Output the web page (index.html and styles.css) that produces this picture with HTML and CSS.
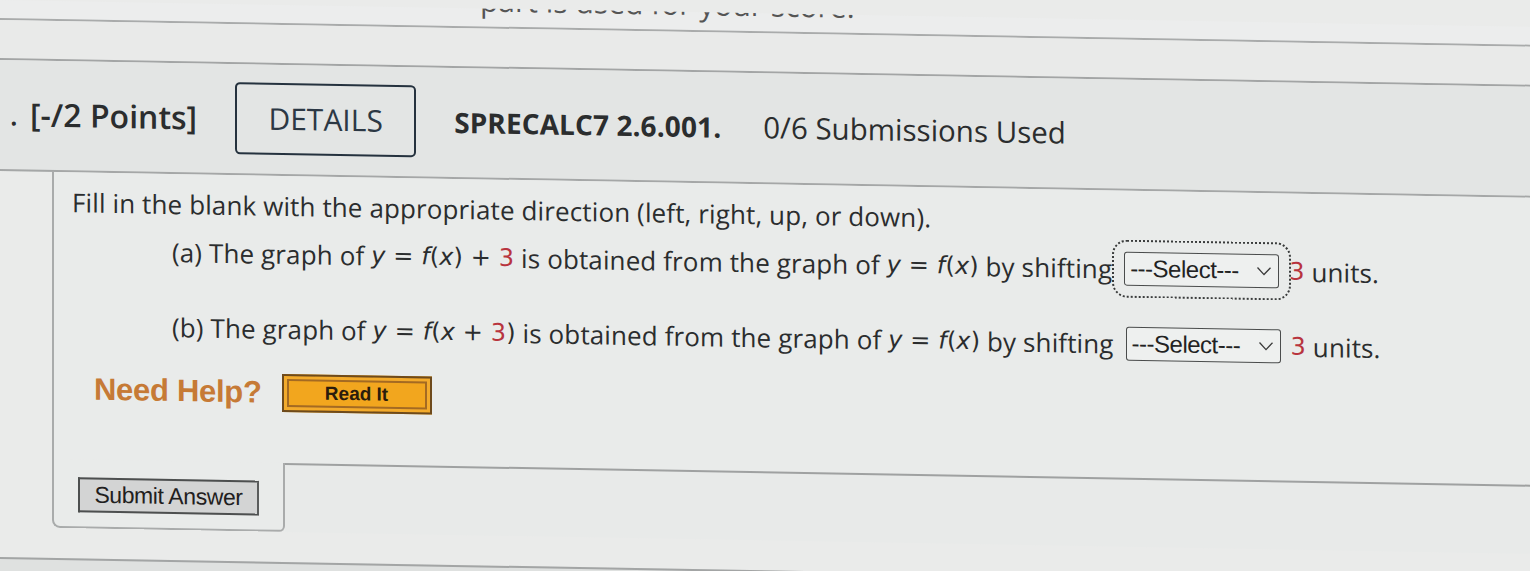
FILE: index.html
```html
<!DOCTYPE html>
<html lang="en">
<head>
<meta charset="utf-8">
<title>SPRECALC7 2.6.001</title>
<link rel="stylesheet" href="styles.css">
</head>
<body>
<div class="page">
  <div class="topstrip"><span class="toptext">part is used for your score.</span></div>
  <div class="band"></div>
  <div class="header">
    <span class="dot">.</span>
    <span class="points">[-/2 Points]</span>
    <button class="details">DETAILS</button>
    <span class="code">SPRECALC7 2.6.001.</span>
    <span class="subs">0/6 Submissions Used</span>
  </div>
  <div class="content">
    <div class="qbox">
      <p class="intro">Fill in the blank with the appropriate direction (left, right, up, or down).</p>
      <div class="parts">
        <div class="part">(a) The graph of <span class="m"><i>y</i> = <i>f</i>(<i>x</i>) + <span class="red">3</span></span> is obtained from the graph of <span class="m"><i>y</i> = <i>f</i>(<i>x</i>)</span> by shifting<span class="sel focus">---Select---<svg class="chev" viewBox="0 0 16 10" width="16" height="10"><path d="M1.5 1.5 L8 8.5 L14.5 1.5" fill="none" stroke="#3a3a3a" stroke-width="1.3"/></svg></span><span class="m red">3</span> units.</div>
        <div class="part">(b) The graph of <span class="m"><i>y</i> = <i>f</i>(<i>x</i> + <span class="red">3</span>)</span> is obtained from the graph of <span class="m"><i>y</i> = <i>f</i>(<i>x</i>)</span> by shifting<span class="sel">---Select---<svg class="chev" viewBox="0 0 16 10" width="16" height="10"><path d="M1.5 1.5 L8 8.5 L14.5 1.5" fill="none" stroke="#3a3a3a" stroke-width="1.3"/></svg></span><span class="m red">3</span> units.</div>
      </div>
      <div class="help">
        <span class="needhelp">Need Help?</span>
        <button class="readit">Read It</button>
      </div>
    </div>
    <div class="bottomrow">
      <div class="tab"><button class="submit">Submit Answer</button></div>
      <div class="tabfill"></div>
    </div>
  </div>
  <div class="footer"></div>
</div>
</body>
</html>
```
FILE: styles.css
```css
html, body {
  margin: 0;
  padding: 0;
  overflow: hidden;
  background: #eaebea;
}
.page {
  width: 1530px;
  transform: skewY(1deg);
  transform-origin: 0 0;
  font-family: "Open Sans", "DejaVu Sans", sans-serif;
  color: #2b2d2e;
}
.topstrip {
  height: 20px;
  background: #eceded;
  border-bottom: 2px solid #a9abab;
  overflow: hidden;
  box-sizing: border-box;
  padding-left: 480px;
}
.toptext {
  display: block;
  font-size: 30px;
  line-height: 30px;
  margin-top: -23px;
  color: #555;
}
.band {
  height: 40px;
  box-sizing: border-box;
  background: #e9eae9;
  border-bottom: 2px solid #a3a5a5;
}
.header {
  height: 111px;
  box-sizing: border-box;
  background: #e3e5e4;
  border-bottom: 2px solid #a5a7a7;
  display: flex;
  align-items: center;
  padding-left: 10px;
  padding-bottom: 2px;
}
.dot {
  font-size: 28px;
  font-weight: 600;
  width: 20px;
}
.points {
  font-size: 32px;
  font-weight: 600;
  margin-right: 38px;
}
.details {
  width: 181px;
  height: 72px;
  box-sizing: border-box;
  border: 2px solid #25323e;
  border-radius: 5px;
  background: transparent;
  font-family: "Open Sans", sans-serif;
  font-size: 30px;
  color: #2c3844;
  margin-right: 38px;
  padding: 0;
}
.code {
  font-size: 28px;
  font-weight: 700;
  margin-right: 42px;
  letter-spacing: 0.1px;
}
.subs {
  font-size: 29.5px;
  font-weight: 400;
}
.content {
  margin-left: 52px;
}
.qbox {
  border-left: 2px solid #a9abab;
  background: #e9ebea;
  padding: 13px 0 51px 18px;
}
.intro {
  margin: 0;
  font-size: 26px;
  line-height: 34px;
  letter-spacing: 0.12px;
}
.parts {
  display: flex;
  flex-direction: column;
  gap: 35px;
  margin-top: 11px;
  padding-left: 100px;
}
.part {
  font-size: 26px;
  line-height: 40px;
  display: flex;
  align-items: center;
  white-space: pre;
  letter-spacing: 0.12px;
}
.m {
  font-family: "DejaVu Sans", Verdana, sans-serif;
  font-size: 24px;
}
.m i {
  font-style: italic;
}
.red {
  color: #b8343e;
}
.sel {
  display: inline-flex;
  align-items: center;
  justify-content: space-between;
  width: 155px;
  height: 34px;
  box-sizing: border-box;
  border: 1px solid #4a4c4c;
  border-radius: 3px;
  background: #eef0ef;
  font-family: "Liberation Sans", Arial, sans-serif;
  font-size: 24px;
  padding: 0 6px 0 5px;
  margin: 0 10px 0 12px;
  color: #222;
  letter-spacing: -0.5px;
}
.focus {
  outline: 2px dotted #3a3c3c;
  outline-offset: 10px;
}
.chev {
  margin-left: 3px;
}
.help {
  display: flex;
  align-items: center;
  height: 38px;
  margin-top: 25px;
  padding-left: 22px;
}
.needhelp {
  font-family: "Liberation Sans", Arial, sans-serif;
  font-weight: 700;
  font-size: 31px;
  color: #c67a36;
  margin-right: 20px;
  letter-spacing: -0.3px;
}
.readit {
  width: 150px;
  height: 38px;
  box-sizing: border-box;
  background: #f2a61e;
  border: 2px solid #6e4a1c;
  box-shadow: inset 0 0 0 3px #f3ab2c, inset 0 0 0 5px #a46a22;
  font-family: "Liberation Sans", Arial, sans-serif;
  font-weight: 700;
  font-size: 19px;
  color: #2a1c0c;
  padding: 0;
}
.bottomrow {
  display: flex;
}
.tab {
  width: 233px;
  height: 69px;
  box-sizing: border-box;
  border-left: 2px solid #a9abab;
  border-right: 2px solid #a9abab;
  border-bottom: 2px solid #a9abab;
  border-radius: 0 0 6px 8px;
  background: #e9ebea;
  padding: 18px 0 0 24px;
}
.submit {
  width: 181px;
  height: 35px;
  box-sizing: border-box;
  background: #d3d4d4;
  border: 2px solid #4d4f4f;
  border-right-color: #5a5c5c;
  font-family: "Liberation Sans", Arial, sans-serif;
  font-size: 23px;
  color: #1f2020;
  padding: 0;
  letter-spacing: -0.4px;
}
.tabfill {
  flex: 1;
  border-top: 2px solid #9fa1a1;
  background: #e8eae9;
}
.footer {
  margin-top: 30px;
  height: 60px;
  border-top: 2px solid #a3a5a5;
  background: #dfe1e0;
}
```
